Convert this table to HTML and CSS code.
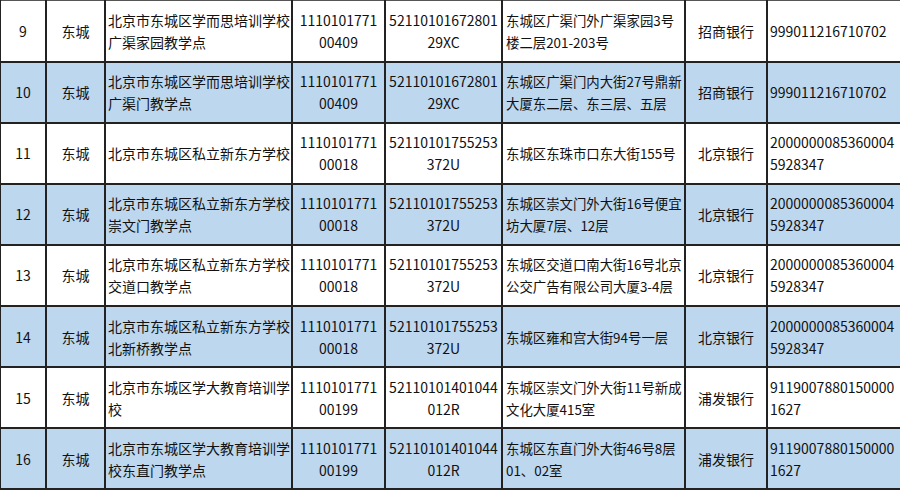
FILE: index.html
```html
<!DOCTYPE html>
<html lang="zh-CN">
<head>
<meta charset="utf-8">
<title>培训学校名单</title>
<link rel="stylesheet" href="styles.css">
</head>
<body>
<table class="grid">
  <colgroup>
    <col class="c-no"><col class="c-area"><col class="c-name"><col class="c-lic"><col class="c-code"><col class="c-addr"><col class="c-bank"><col class="c-acct">
  </colgroup>
  <tbody>
    <tr>
      <td class="center">9</td><td class="center">东城</td>
      <td class="left">北京市东城区学而思培训学校<br>广渠家园教学点</td>
      <td class="center">1110101771<br>00409</td>
      <td class="center">52110101672801<br>29XC</td>
      <td class="left addr">东城区广渠门外广渠家园3号<br>楼二层201-203号</td>
      <td class="center">招商银行</td>
      <td class="left">999011216710702</td>
    </tr>
    <tr class="blue">
      <td class="center">10</td><td class="center">东城</td>
      <td class="left">北京市东城区学而思培训学校<br>广渠门教学点</td>
      <td class="center">1110101771<br>00409</td>
      <td class="center">52110101672801<br>29XC</td>
      <td class="left addr">东城区广渠门内大街27号鼎新<br>大厦东二层、东三层、五层</td>
      <td class="center">招商银行</td>
      <td class="left">999011216710702</td>
    </tr>
    <tr>
      <td class="center">11</td><td class="center">东城</td>
      <td class="left">北京市东城区私立新东方学校</td>
      <td class="center">1110101771<br>00018</td>
      <td class="center">52110101755253<br>372U</td>
      <td class="left addr">东城区东珠市口东大街155号</td>
      <td class="center">北京银行</td>
      <td class="left">2000000085360004<br>5928347</td>
    </tr>
    <tr class="blue">
      <td class="center">12</td><td class="center">东城</td>
      <td class="left">北京市东城区私立新东方学校<br>崇文门教学点</td>
      <td class="center">1110101771<br>00018</td>
      <td class="center">52110101755253<br>372U</td>
      <td class="left addr">东城区崇文门外大街16号便宜<br>坊大厦7层、12层</td>
      <td class="center">北京银行</td>
      <td class="left">2000000085360004<br>5928347</td>
    </tr>
    <tr>
      <td class="center">13</td><td class="center">东城</td>
      <td class="left">北京市东城区私立新东方学校<br>交道口教学点</td>
      <td class="center">1110101771<br>00018</td>
      <td class="center">52110101755253<br>372U</td>
      <td class="left addr">东城区交道口南大街16号北京<br>公交广告有限公司大厦3-4层</td>
      <td class="center">北京银行</td>
      <td class="left">2000000085360004<br>5928347</td>
    </tr>
    <tr class="blue">
      <td class="center">14</td><td class="center">东城</td>
      <td class="left">北京市东城区私立新东方学校<br>北新桥教学点</td>
      <td class="center">1110101771<br>00018</td>
      <td class="center">52110101755253<br>372U</td>
      <td class="left addr">东城区雍和宫大街94号一层</td>
      <td class="center">北京银行</td>
      <td class="left">2000000085360004<br>5928347</td>
    </tr>
    <tr>
      <td class="center">15</td><td class="center">东城</td>
      <td class="left">北京市东城区学大教育培训学<br>校</td>
      <td class="center">1110101771<br>00199</td>
      <td class="center">52110101401044<br>012R</td>
      <td class="left addr">东城区崇文门外大街11号新成<br>文化大厦415室</td>
      <td class="center">浦发银行</td>
      <td class="left">9119007880150000<br>1627</td>
    </tr>
    <tr class="blue">
      <td class="center">16</td><td class="center">东城</td>
      <td class="left">北京市东城区学大教育培训学<br>校东直门教学点</td>
      <td class="center">1110101771<br>00199</td>
      <td class="center">52110101401044<br>012R</td>
      <td class="left addr">东城区东直门外大街46号8层<br>01、02室</td>
      <td class="center">浦发银行</td>
      <td class="left">9119007880150000<br>1627</td>
    </tr>
  </tbody>
</table>
</body>
</html>
```

FILE: styles.css
```css
html, body {
  margin: 0;
  padding: 0;
  background: #ffffff;
  overflow: hidden;
}
body {
  width: 900px;
  height: 492px;
}
.grid {
  border-collapse: collapse;
  table-layout: fixed;
  width: 920px;
  margin: 0 0 0 -1px;
  font-family: "Noto Sans CJK SC", "Noto Sans", sans-serif;
  font-size: 14px;
  line-height: 22px;
  color: #111111;
}
.c-no { width: 46px; }
.c-area { width: 59px; }
.c-name { width: 187px; }
.c-lic { width: 93px; }
.c-code { width: 117px; }
.c-addr { width: 183px; }
.c-bank { width: 82px; }
.c-acct { width: 153px; }
.grid tr { height: 61.1px; }
.grid td {
  border: 2px solid #222222;
  padding: 0 0 0 2px;
  vertical-align: middle;
  overflow: hidden;
  white-space: nowrap;
}
.grid td.center { padding: 0; }
.grid td.addr {
  font-size: 13.4px;
  padding-left: 3px;
}
.grid tr:first-child td { border-top: 1px solid #555555; }
.blue td { background: #bdd7ee; }
.center { text-align: center; }
.left { text-align: left; }
```
